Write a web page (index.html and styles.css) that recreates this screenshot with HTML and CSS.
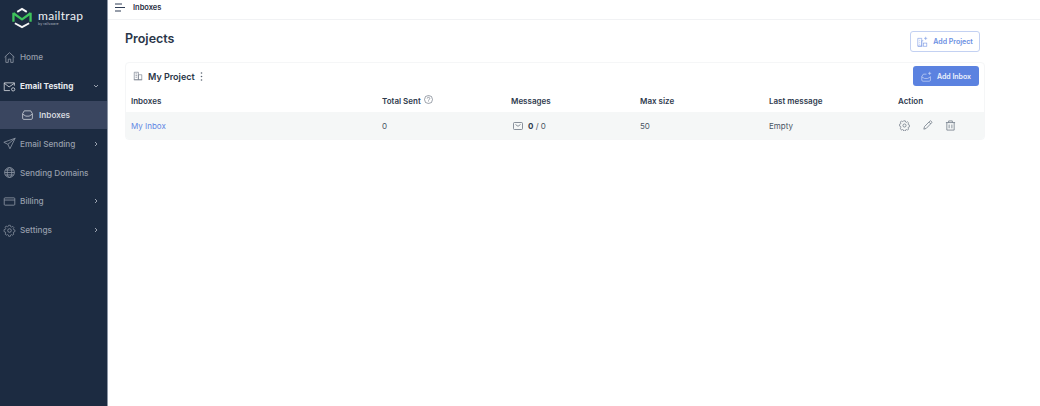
FILE: index.html
```html
<!DOCTYPE html>
<html lang="en">
<head>
<meta charset="utf-8">
<title>Inboxes</title>
<link rel="stylesheet" href="styles.css">
</head>
<body>
<div class="app">
  <aside class="sidebar">
    <div class="brand">
      <svg class="brand-icon" width="20" height="22" viewBox="0 0 21 22" fill="none">
        <path d="M5.500 4.500 10.500 1.500l5 3" stroke="#f4f5f6" stroke-width="2"/>
        <path d="M1.500 5.500V15M19.500 15V5.500" stroke="#3fc45c" stroke-width="2.400"/>
        <path d="M1.500 6l9 6.500 9-6.500" stroke="#3fc45c" stroke-width="2.400" stroke-linejoin="round"/>
        <path d="M3 16.500l7.500 4 7.500-4" stroke="#f4f5f6" stroke-width="2"/>
      </svg>
      <div class="brand-text">
        <span class="brand-name">mailtrap</span>
        <span class="brand-by">by railsware</span>
      </div>
    </div>
    <nav class="nav">
      <a class="nav-item">
        <svg class="nav-icon" viewBox="0 0 16 16" fill="none"><path d="M2 7.500 8 2l6 5.500M3.500 6.500V14h3v-4h3v4h3V6.500"/></svg>
        <span class="nav-label">Home</span>
      </a>
      <a class="nav-item is-open">
        <svg class="nav-icon" viewBox="0 0 16 16" fill="none"><path d="M14 7V3.500H1.500V13H8.500M1.500 4l6 4.500L14 4"/><circle cx="12.500" cy="11.500" r="2"/></svg>
        <span class="nav-label">Email Testing</span>
        <svg class="chev" viewBox="0 0 8 8" fill="none"><path d="M2 3l2 2 2-2"/></svg>
      </a>
      <a class="nav-sub">
        <svg class="nav-icon" viewBox="0 0 16 16" fill="none"><path d="M2 7v5.500A1.500 1.500 0 0 0 3.500 14h9a1.500 1.500 0 0 0 1.500-1.500V7L12 3.500H4zM2 7.500l4 2.500h4l4-2.500"/></svg>
        <span>Inboxes</span>
      </a>
      <a class="nav-item">
        <svg class="nav-icon" viewBox="0 0 16 16" fill="none"><path d="M15 1.500 1 6.500l5 2.500 2.500 5.500zM6 9l9-7.500"/></svg>
        <span class="nav-label">Email Sending</span>
        <svg class="chev" viewBox="0 0 8 8" fill="none"><path d="M3 2l2 2-2 2"/></svg>
      </a>
      <a class="nav-item">
        <svg class="nav-icon" viewBox="0 0 16 16" fill="none"><circle cx="8" cy="8" r="6"/><ellipse cx="8" cy="8" rx="2.800" ry="6"/><path d="M2 8h12M2.800 5h10.400M2.800 11h10.400"/></svg>
        <span class="nav-label">Sending Domains</span>
      </a>
      <a class="nav-item">
        <svg class="nav-icon" viewBox="0 0 16 16" fill="none"><rect x="1.500" y="3.500" width="13" height="9" rx="1"/><path d="M1.500 6.200h13"/></svg>
        <span class="nav-label">Billing</span>
        <svg class="chev" viewBox="0 0 8 8" fill="none"><path d="M3 2l2 2-2 2"/></svg>
      </a>
      <a class="nav-item">
        <svg class="nav-icon" viewBox="0 0 16 16" fill="none"><path d="M6.800 1.500h2.400l.4 1.900 1.500.7 1.700-1 1.600 1.700-1 1.600.6 1.500 1.900.5v2.300l-1.900.5-.6 1.500 1 1.600-1.600 1.600-1.700-.9-1.500.6-.4 1.900H6.800l-.4-1.900-1.500-.6-1.700.9-1.600-1.600 1-1.600-.6-1.500-1.900-.5V7.900l1.900-.5.600-1.500-1-1.600 1.600-1.700 1.700 1 1.500-.7z" transform="translate(1.200 .3) scale(.85)"/><circle cx="8" cy="8" r="2.200"/></svg>
        <span class="nav-label">Settings</span>
        <svg class="chev" viewBox="0 0 8 8" fill="none"><path d="M3 2l2 2-2 2"/></svg>
      </a>
    </nav>
  </aside>
  <div class="main">
    <header class="topbar">
      <svg class="menu-icon" width="10" height="9" viewBox="0 0 10 9" fill="none"><path d="M0 1h7M0 4.500h10M0 8h6"/></svg>
      <span class="crumb">Inboxes</span>
    </header>
    <div class="content">
      <div class="page-head">
        <h1 class="page-title">Projects</h1>
        <button class="btn btn-outline">
          <svg class="btn-icon" viewBox="0 0 14 14" fill="none"><path d="M1 13V3h5v10zM6 13V6h2M1 13h6M3 5.500h1M3 8h1M3 10.500h1"/><rect x="8" y="9" width="4.500" height="4"/><path d="M11 1v4M9 3h4"/></svg>
          Add Project
        </button>
      </div>
      <section class="card">
        <div class="card-head">
          <div class="project">
            <svg class="project-icon" viewBox="0 0 12 12" fill="none"><path d="M1.500 10.500v-9h5v9zM6.500 10.500V4.500h4v6zM1 10.500h10M3 3.500h2M3 5.500h2M3 7.500h2"/></svg>
            <span class="project-name">My Project</span>
            <svg class="kebab" width="3" height="9" viewBox="0 0 3 9"><circle cx="1.500" cy="1" r=".8"/><circle cx="1.500" cy="4.500" r=".8"/><circle cx="1.500" cy="8" r=".8"/></svg>
          </div>
          <button class="btn btn-solid">
            <svg class="btn-icon" viewBox="0 0 14 14" fill="none"><path d="M1 7v4.500A1.500 1.500 0 0 0 2.500 13h8a1.500 1.500 0 0 0 1.500-1.500V7M1 7l2-3h4M1 7.500l3.500 2h4l3.500-2M11 1v4M9 3h4"/></svg>
            Add Inbox
          </button>
        </div>
        <div class="row row-head">
          <div>Inboxes</div>
          <div class="cell-flex">Total Sent
            <svg class="help" width="9" height="9" viewBox="0 0 9 9" fill="none"><circle cx="4.500" cy="4.500" r="4"/><path d="M3.200 3.500a1.300 1.300 0 1 1 1.900 1.200c-.4.200-.6.400-.6.900M4.500 6.500v.6"/></svg>
          </div>
          <div>Messages</div>
          <div>Max size</div>
          <div>Last message</div>
          <div>Action</div>
        </div>
        <div class="row row-body">
          <div><a class="inbox-link">My Inbox</a></div>
          <div>0</div>
          <div class="cell-msg">
            <svg class="msg-icon" width="10" height="8" viewBox="0 0 10 8" fill="none"><rect x=".5" y=".5" width="9" height="7" rx="1"/><path d="M2.500 2.500 5 4.300l2.500-1.800"/></svg>
            <span><b>0</b> / 0</span>
          </div>
          <div>50</div>
          <div>Empty</div>
          <div class="actions">
            <svg class="act" viewBox="0 0 12 12" fill="none"><path d="M5 .8h2l.3 1.400 1.200.5 1.200-.8 1.400 1.400-.8 1.200.5 1.200 1.400.3v2l-1.400.3-.5 1.200.8 1.200-1.400 1.400-1.200-.8-1.200.5-.3 1.400H5l-.3-1.400-1.200-.5-1.200.8L.9 9.700l.8-1.200-.5-1.200L-.2 7V5l1.400-.3.500-1.200-.8-1.200L2.300.9l1.200.8 1.200-.5z" transform="translate(.6 .2) scale(.9)"/><circle cx="6" cy="6" r="1.700"/></svg>
            <svg class="act" viewBox="0 0 12 12" fill="none"><path d="M2 10 2.700 7.200 8.500 1.300a1 1 0 0 1 1.500 0l.4.4a1 1 0 0 1 0 1.500L4.600 9.200zM7.600 2.300l2 2"/></svg>
            <svg class="act" viewBox="0 0 12 12" fill="none"><path d="M1 2.800h10M4 2.800V1h4v1.800M2 2.800V11h8V2.800M4.500 5v4M7.500 5v4"/></svg>
          </div>
        </div>
      </section>
    </div>
  </div>
</div>
</body>
</html>
```
FILE: styles.css
```css
* { box-sizing: border-box; }
html, body { margin: 0; height: 100%; }
body {
  font-family: Inter, "Liberation Sans", sans-serif;
  font-size: 8.200px;
  color: #3c4858;
  background: #fff;
  overflow: hidden;
}
.app { display: flex; height: 406px; }

.sidebar {
  width: 108px;
  flex: none;
  background: #1c2b41;
  border-right: 1px solid #8c96a5;
}
.brand {
  display: flex;
  align-items: center;
  gap: 6px;
  height: 36px;
  padding: 0 0 0 12px;
}
.brand-text { display: flex; flex-direction: column; }
.brand-name { font-family: Lato, sans-serif; font-size: 12px; line-height: 13px; letter-spacing: .3px; color: #eef1f4; }
.brand-by { font-size: 3.600px; line-height: 5px; color: #aab2bd; }
.nav { display: flex; flex-direction: column; margin-top: 7px; }
.nav-item {
  display: flex;
  align-items: center;
  height: 28.800px;
  padding: 0 7px 0 3px;
  color: #969eab;
  font-weight: 500;
}
.nav-icon {
  width: 13px;
  height: 13px;
  flex: none;
  stroke: #8f97a5;
  stroke-width: 1;
}
.nav-label { margin-left: 4px; flex: 1; }
.is-open { color: #e6e9ed; font-weight: 700; }
.is-open .nav-icon { stroke: #d5d9df; }
.chev { width: 8px; height: 8px; stroke: #9aa2af; stroke-width: 1; flex: none; }
.nav-sub {
  display: flex;
  align-items: center;
  gap: 5px;
  height: 28.800px;
  padding-left: 21px;
  background: #3a4660;
  color: #d5d9df;
  font-weight: 600;
}
.nav-sub .nav-icon { stroke: #cdd2d9; }

.main { flex: 1; min-width: 0; display: flex; flex-direction: column; }
.topbar {
  display: flex;
  align-items: center;
  gap: 8px;
  height: 20px;
  padding: 0 0 4px 7px;
  border-bottom: 1px solid #f1f2f4;
}
.menu-icon { stroke: #2f3d55; stroke-width: 1; }
.crumb { font-size: 7.500px; font-weight: 600; color: #1f2d42; }
.content { padding: 0 55px 0 17px; }
.page-head {
  display: flex;
  align-items: center;
  justify-content: space-between;
  height: 42px;
  padding: 0 5px 0 0;
}
.page-title { margin: 0 0 6px; font-size: 12.500px; font-weight: 600; color: #2a3648; }
.btn {
  display: flex;
  align-items: center;
  justify-content: center;
  gap: 5px;
  font: 600 7px Inter, "Liberation Sans", sans-serif;
  border-radius: 3px;
  padding: 0;
}
.btn-icon { width: 11px; height: 11px; stroke-width: .8; }
.btn-outline {
  width: 70px;
  height: 21px;
  background: #fff;
  border: 1px solid #c3d1f2;
  color: #6a8ee2;
}
.btn-outline .btn-icon { stroke: #7d9be4; }
.btn-solid {
  width: 66px;
  height: 20px;
  background: #5b82e0;
  border: 0;
  color: #eef2fc;
}
.btn-solid .btn-icon { stroke: #d7e1f8; }

.card {
  border: 1px solid #f5f6f7;
  border-radius: 4px;
  overflow: hidden;
  background: #fff;
}
.card-head {
  display: flex;
  align-items: center;
  justify-content: space-between;
  height: 26px;
  padding: 0 5px 0 7px;
}
.project { display: flex; align-items: center; }
.project-icon { width: 10px; height: 10px; stroke: #777f8c; stroke-width: .8; }
.project-name { margin-left: 5px; font-size: 9px; font-weight: 600; color: #2a3648; }
.kebab { margin-left: 5px; fill: #5a6472; }
.row {
  display: grid;
  grid-template-columns: 251px 129px 129px 129px 129px 1fr;
  align-items: center;
  padding-left: 5px;
}
.row-head { height: 23px; font-weight: 600; font-size: 8px; color: #2f3b4e; }
.row-body { height: 27px; background: #f5f7f7; font-size: 8px; color: #4a5564; }
.cell-flex { display: flex; align-items: center; gap: 3px; }
.help { stroke: #5c6573; stroke-width: .6; margin-top: -3px; }
.inbox-link { color: #5f86e4; }
.cell-msg { display: flex; align-items: center; gap: 5px; padding-left: 2px; }
.msg-icon { stroke: #6c7583; stroke-width: .8; }
.cell-msg b { font-weight: 700; color: #2f3b4e; }
.actions { display: flex; gap: 12px; padding-left: 1px; }
.act { width: 11px; height: 11px; stroke: #66707e; stroke-width: .8; }
```
